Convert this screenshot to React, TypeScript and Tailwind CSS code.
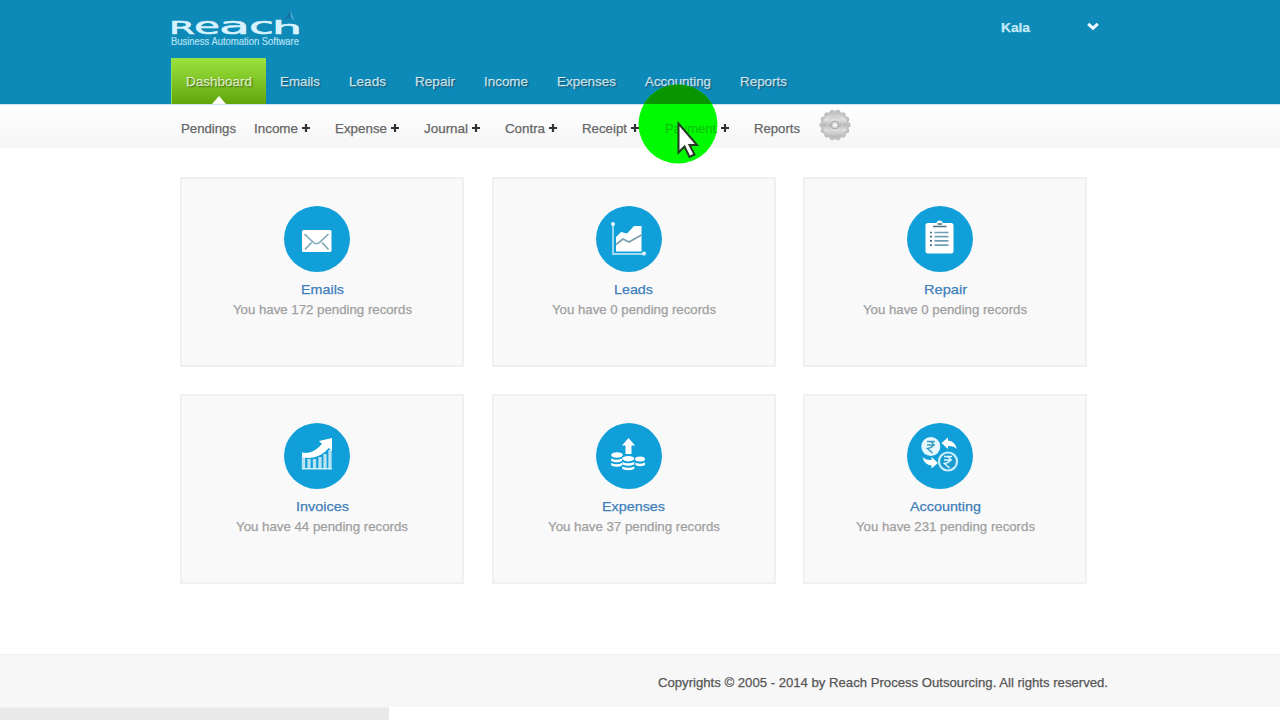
import React from "react";

type NavItem = { label: string; cell: string; width: number };
type SubItem = { label: string; cell: string; width: number; plus?: boolean };
type Card = { title: string; note: string; titleWidth: number; noteWidth: number; icon: React.ReactNode };

const NAV: NavItem[] = [
  { label: "Emails", cell: "w-[69px]", width: 40 },
  { label: "Leads", cell: "w-[66px]", width: 37 },
  { label: "Repair", cell: "w-[69px]", width: 40 },
  { label: "Income", cell: "w-[73px]", width: 44 },
  { label: "Expenses", cell: "w-[88px]", width: 59 },
  { label: "Accounting", cell: "w-[95px]", width: 66 },
  { label: "Reports", cell: "w-[60px]", width: 47 },
];

const SUB: SubItem[] = [
  { label: "Pendings", cell: "w-[73px]", width: 55 },
  { label: "Income", cell: "w-[81px]", width: 44, plus: true },
  { label: "Expense", cell: "w-[89px]", width: 52, plus: true },
  { label: "Journal", cell: "w-[81px]", width: 44, plus: true },
  { label: "Contra", cell: "w-[77px]", width: 40, plus: true },
  { label: "Receipt", cell: "w-[83px]", width: 45, plus: true },
  { label: "Payment", cell: "w-[89px]", width: 52, plus: true },
  { label: "Reports", cell: "w-[65px]", width: 46 },
];

/* Text stretched to an exact advance width. */
function Label({ text, width }: { text: string; width: number }) {
  return (
    <svg width={width} height={18} className="block shrink-0 overflow-visible">
      <text
        x={0}
        y={13.5}
        textLength={width}
        lengthAdjust="spacingAndGlyphs"
        fill="currentColor"
        stroke="currentColor"
        strokeWidth={0.25}
      >
        {text}
      </text>
    </svg>
  );
}

function Mail() {
  return (
    <g>
      <rect x="18" y="24" width="29.500" height="22" rx="1.500" fill="#fff" />
      <path d="M20.500 28l9 8.500q3 2.500 6 0l9-8.500M21 43.500l6.500-7M44.500 43.500l-6.500-7" fill="none" stroke="#7aa6b5" strokeWidth="1.600" />
    </g>
  );
}

function AreaChart() {
  return (
    <g>
      <path d="M17 19v29h31" fill="none" stroke="#a5dcf3" strokeWidth="1.800" />
      <circle cx="17" cy="18" r="2" fill="#e8f8ff" />
      <circle cx="48" cy="47.500" r="2" fill="#e8f8ff" />
      <path d="M20 31l5-5 6 1.500 7-7.500h7.500v25.500H20z" fill="#fff" />
      <path d="M20 38.500l7-5.500 6 3 12.500-7" fill="none" stroke="#789fab" strokeWidth="1.800" />
    </g>
  );
}

function Clipboard() {
  return (
    <g>
      <rect x="18.500" y="17" width="28" height="30.500" rx="2.500" fill="#fff" />
      <path d="M25.500 20v-2.500h4q0-3 3-3t3 3h4V20z" fill="#fff" />
      <path d="M26 20.500h13.500M30.500 18h4.500" stroke="#47717c" strokeWidth="1.400" />
      <path d="M27.500 26.500h14M27.500 30.700h14M27.500 34.900h14M27.500 39.100h14" stroke="#6e9fb6" strokeWidth="1.700" />
      <path d="M23 26.500h2M23 30.700h2M23 34.900h2M23 39.100h2" stroke="#466d7d" strokeWidth="1.700" />
    </g>
  );
}

function Growth() {
  return (
    <g>
      <path d="M19.500 34v12M25 36v10M30.500 36v10M36 34v12M41 31v15M46 27v19" stroke="#b8e2f2" strokeWidth="3.300" />
      <path d="M18 45.800h30" stroke="#dff4fc" strokeWidth="1.300" />
      <path d="M18 29.500q10 2.500 20-8.500l-3-3 13-3v13l-3.300-3Q34 38 18 34z" fill="#fff" />
    </g>
  );
}

function Coins() {
  return (
    <g>
      <path d="M29.500 31v-8.500H26L32.500 15l6.500 7.500h-3.500V31z" fill="#fff" />
      <g fill="#fff">
        <ellipse cx="21" cy="32" rx="5.800" ry="2.800" />
        <path d="M15.200 35.500q5.500 2.500 10.800 0v2.500q-5 2.500-10.800 0zM15.200 40q5.500 2.500 10.800 0v2.500q-5 2.500-10.800 0z" />
        <ellipse cx="32.300" cy="35.700" rx="6" ry="2.700" />
        <path d="M26.300 39q6 2.500 12 0v2.500q-6 2.500-12 0zM26.300 43.500q6 2.500 12 0V46q-6 2.500-12 0z" />
        <ellipse cx="44" cy="36" rx="5" ry="2.500" />
        <path d="M39.500 39.500q4.500 2.500 9.500 0V42q-5 2.500-9.500 0z" />
      </g>
    </g>
  );
}

function Exchange() {
  return (
    <g>
      <circle cx="23.800" cy="23.500" r="9.500" fill="#e8f8ff" />
      <circle cx="41" cy="38.500" r="9" fill="#1a9cd0" stroke="#c9edfb" strokeWidth="2.200" />
      <path d="M20 18.500h8M20 22h8M20 18.500h2q4 0 4 3t-5.500 4l5 4.500" fill="none" stroke="#3b9fc0" strokeWidth="1.600" />
      <path d="M37 33.500h8M37 37h8M37 33.500h2q4 0 4 3t-5.500 4l5 4.500" fill="none" stroke="#e1f6ff" strokeWidth="1.600" />
      <path d="M34.500 20l6.500-5.500v3q7 .5 9 8.500-3.500-3.500-9-3v3z" fill="#fff" />
      <path d="M31 40l-6.500 5.500v-3q-7-.5-9-8.500 3.500 3.500 9 3v-3z" fill="#fff" />
    </g>
  );
}

const CARDS: Card[] = [
  { title: "Emails", note: "You have 172 pending records", titleWidth: 43, noteWidth: 179, icon: <Mail /> },
  { title: "Leads", note: "You have 0 pending records", titleWidth: 39, noteWidth: 164, icon: <AreaChart /> },
  { title: "Repair", note: "You have 0 pending records", titleWidth: 43, noteWidth: 164, icon: <Clipboard /> },
  { title: "Invoices", note: "You have 44 pending records", titleWidth: 53, noteWidth: 172, icon: <Growth /> },
  { title: "Expenses", note: "You have 37 pending records", titleWidth: 63, noteWidth: 172, icon: <Coins /> },
  { title: "Accounting", note: "You have 231 pending records", titleWidth: 71, noteWidth: 179, icon: <Exchange /> },
];

function Logo() {
  return (
    <svg width="132" height="42" viewBox="0 0 132 42" className="block overflow-visible">
      <path d="M111 13q6-3 8-11l5 12-5-3z" fill="#1576a6" />
      <path d="M119 2l5 12-4-3z" fill="#3fa9d2" />
      <text y="26.500" fill="#d8f3ff" stroke="#d8f3ff" strokeWidth=".5" fontFamily="DejaVu Sans, sans-serif">
        <tspan x="-2" fontSize="17.500" textLength="26" lengthAdjust="spacingAndGlyphs">R</tspan>
        <tspan x="23" fontSize="22.500" textLength="26" lengthAdjust="spacingAndGlyphs">e</tspan>
        <tspan x="48" fontSize="22.500" textLength="31" lengthAdjust="spacingAndGlyphs">a</tspan>
        <tspan x="78" fontSize="22.500" textLength="25" lengthAdjust="spacingAndGlyphs">c</tspan>
        <tspan x="101" fontSize="17" textLength="30" lengthAdjust="spacingAndGlyphs">h</tspan>
      </text>
      <text
        x="0"
        y="38"
        fontSize="11.500"
        fill="#b4e0f2"
        stroke="#b4e0f2"
        strokeWidth=".2"
        textLength="128"
        lengthAdjust="spacingAndGlyphs"
      >
        Business Automation Software
      </text>
    </svg>
  );
}

function Gear() {
  const teeth = Array.from({ length: 14 }, (_, i) => (i * Math.PI) / 7);
  return (
    <svg width="32" height="32" viewBox="-16 -16 32 32" className="mb-[3px] block shrink-0">
      <defs>
        <linearGradient id="metal" x1="0" y1="0" x2="0" y2="1">
          <stop offset="0" stopColor="#c2c2c2" />
          <stop offset=".3" stopColor="#e2e2e2" />
          <stop offset=".5" stopColor="#b5b5b5" />
          <stop offset=".7" stopColor="#e0e0e0" />
          <stop offset="1" stopColor="#b5b5b5" />
        </linearGradient>
      </defs>
      {teeth.map((a) => (
        <circle key={a} cx={12.6 * Math.cos(a)} cy={12.6 * Math.sin(a)} r="2.500" fill="#c4c4c4" stroke="#acacac" strokeWidth=".7" />
      ))}
      <circle r="12.300" fill="url(#metal)" />
      <circle r="7.500" fill="none" stroke="#cecece" />
      <circle r="4" fill="#d2d2d2" stroke="#ababab" />
      <circle r="1.800" fill="#fafafa" />
    </svg>
  );
}

function Plus() {
  return (
    <svg width="8" height="8" viewBox="0 0 8 8" className="mb-px block shrink-0">
      <path d="M4 0v8M0 4h8" stroke="#333" strokeWidth="2.200" />
    </svg>
  );
}

export default function App() {
  return (
    <div className="relative flex h-[720px] w-[1280px] flex-col overflow-hidden bg-white font-['Liberation_Sans',Arial,sans-serif] text-[13px]">
      <header className="flex h-[104px] shrink-0 flex-col bg-[#0e8ab9] pl-[171px]">
        <div className="flex h-[58px] shrink-0 pt-[7px]">
          <Logo />
          <div className="ml-[698px] flex h-[39px] items-center font-bold text-[#c3e9f8]">
            <Label text="Kala" width={29} />
            <svg width="12" height="9" viewBox="0 0 12 9" className="ml-[57px] block">
              <path d="M1.200 1.800L6 6.300l4.800-4.500" fill="none" stroke="#f2fcff" strokeWidth="3" />
            </svg>
          </div>
        </div>
        <nav className="flex h-[46px] items-center text-[#d9f0fa] [text-shadow:1px_1px_1px_#17536b]">
          <div className="relative mr-[14px] flex h-full w-[95px] items-center justify-center border-t border-l border-[#91df52] bg-linear-to-b from-[#9ce23b] to-[#61a60a] pr-px pb-px text-[#e8f8d4] [text-shadow:1px_1px_1px_#416e0b]">
            <Label text="Dashboard" width={66} />
            <svg width="14" height="8" className="absolute bottom-0 left-[40px]">
              <path d="M0 8l7-8 7 8z" fill="#fff" />
            </svg>
          </div>
          {NAV.map((n) => (
            <div key={n.label} className={n.cell}>
              <Label text={n.label} width={n.width} />
            </div>
          ))}
        </nav>
      </header>

      <nav className="flex h-[44px] shrink-0 items-center border-t border-[#c9e6f0] bg-linear-to-b from-white to-[#f5f5f5] pl-[180.500px] text-[#666]">
        {SUB.map((s) => (
          <div key={s.label} className={`flex items-center gap-[4px] pt-[3px] ${s.cell}`}>
            <Label text={s.label} width={s.width} />
            {s.plus && <Plus />}
          </div>
        ))}
        <Gear />
      </nav>

      <main className="grid shrink-0 grid-cols-[284px_284px_284px] grid-rows-[190px_190px] gap-x-[27.500px] gap-y-[27px] pt-[29px] pl-[180px]">
        {CARDS.map((c) => (
          <section key={c.title} className="flex flex-col items-center border-2 border-[#f0f0f0] bg-[#f9f9f9] pt-[27px]">
            <svg width="66" height="66" viewBox="0 0 66 66" className="mr-[10px] block">
              <circle cx="33" cy="33" r="33" fill="#109fd8" />
              {c.icon}
            </svg>
            <div className="mt-[8px] text-[13.500px] text-[#3e7eba]">
              <Label text={c.title} width={c.titleWidth} />
            </div>
            <div className="mt-[2px] text-[#9f9f9f]">
              <Label text={c.note} width={c.noteWidth} />
            </div>
          </section>
        ))}
      </main>

      <footer className="mt-auto flex h-[53px] shrink-0 items-center border-t border-[#f0f0f0] bg-[#f7f7f7] pt-px pl-[658px] text-[#555]">
        <Label text="Copyrights © 2005 - 2014 by Reach Process Outsourcing. All rights reserved." width={450} />
      </footer>
      <div className="h-[13px] shrink-0">
        <div className="h-full w-[389px] border-t border-[#f0f0f0] bg-[#e9e9e9]" />
      </div>

      <div className="absolute top-[84px] left-[638px] h-[80px] w-[80px]">
        <svg width="80" height="80" viewBox="0 0 80 80" className="block overflow-visible">
          <defs>
            <clipPath id="spot">
              <circle cx="40" cy="40" r="39.500" />
            </clipPath>
          </defs>
          <g clipPath="url(#spot)">
            <rect width="80" height="80" fill="#00fb00" />
            <rect width="80" height="20" fill="#089500" />
            <text x="27" y="49" textLength="51" lengthAdjust="spacingAndGlyphs" fill="#08bd08">
              Payment
            </text>
          </g>
          <path d="M40.500 39.500v29l6-6 5 10.500 5-2.500-5-9.500h7.500z" fill="#fff" stroke="#263b26" strokeWidth="2" />
        </svg>
      </div>
    </div>
  );
}
